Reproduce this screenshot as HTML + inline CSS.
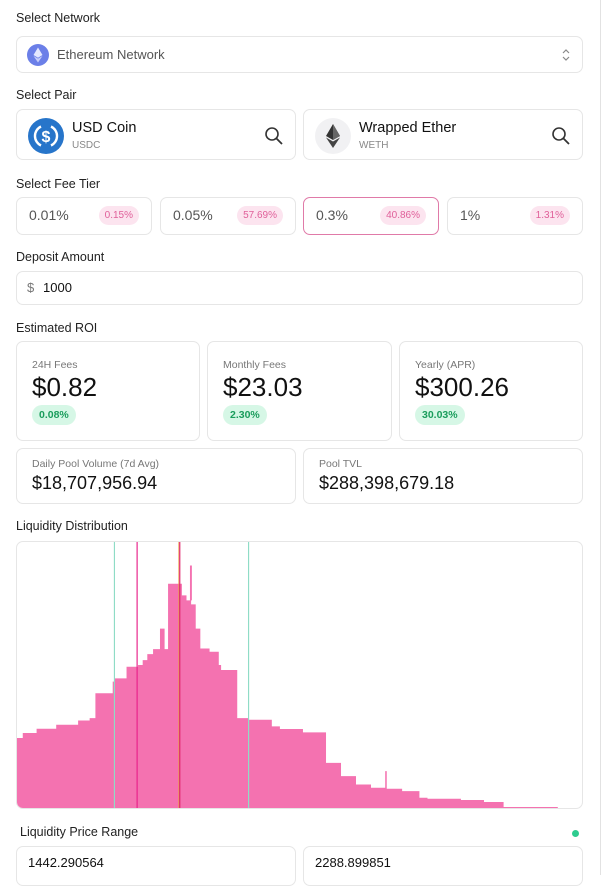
<!DOCTYPE html>
<html><head><style>
*{box-sizing:border-box;margin:0;padding:0}
body{width:603px;height:875px;background:#fff;font-family:"Liberation Sans",sans-serif;color:#111;position:relative;overflow:hidden}
.a{position:absolute}
.lbl{position:absolute;left:16px;font-size:12.5px;color:#222}
.box{position:absolute;border:1px solid #e6e6e6;border-radius:7px;background:#fff}
.fee{font-size:14px;color:#555;position:absolute;left:12px;top:9px}
.pill{position:absolute;right:12px;top:8px;background:#fce4ef;color:#e0609a;font-size:10px;padding:4px 6px;border-radius:10px}
.sm{position:absolute;left:15px;font-size:10.5px;color:#777}
.big{position:absolute;left:15px;font-size:26px;color:#111}
.g{position:absolute;left:15px;top:63px;background:#d6f7e6;color:#1a9d5c;font-size:10.5px;font-weight:bold;padding:4px 7px;border-radius:10px}
.mid{position:absolute;left:15px;top:24px;font-size:18px}
</style></head><body>
<div class="a" style="left:600px;top:0;width:1px;height:875px;background:#e2e2e2"></div>

<div class="lbl" style="top:11px">Select Network</div>
<div class="box" style="left:16px;top:36px;width:567px;height:37px">
 <svg class="a" style="left:10px;top:7px" width="22" height="22" viewBox="0 0 22 22"><circle cx="11" cy="11" r="11" fill="#6b7fe8"/><path d="M11 3.5L6.5 11 11 13.7 15.5 11Z" fill="#e4e8ff"/><path d="M11 14.6L6.5 12 11 18.5 15.5 12Z" fill="#c6cdfa"/></svg>
 <div class="a" style="left:40px;top:10px;font-size:13px;color:#555">Ethereum Network</div>
 <svg class="a" style="left:544px;top:11px" width="10" height="14" viewBox="0 0 10 14"><path d="M2 5L5 2 8 5M2 9L5 12 8 9" stroke="#888" stroke-width="1.2" fill="none"/></svg>
</div>

<div class="lbl" style="top:88px">Select Pair</div>
<div class="box" style="left:16px;top:109px;width:280px;height:51px">
 <svg class="a" style="left:11px;top:8px" width="36" height="36" viewBox="0 0 36 36"><circle cx="18" cy="18" r="18" fill="#2775ca"/><path d="M13 8.5A10.5 10.5 0 0 0 13 27.5M23 8.5A10.5 10.5 0 0 1 23 27.5" stroke="#fff" stroke-width="2.4" fill="none"/><text x="18" y="24" text-anchor="middle" fill="#fff" font-size="16" font-weight="bold" font-family="Liberation Sans">$</text></svg>
 <div class="a" style="left:55px;top:10px;font-size:14.5px">USD Coin</div>
 <div class="a" style="left:55px;top:30px;font-size:10px;color:#888">USDC</div>
 <svg class="a" style="left:247px;top:16px" width="20" height="20" viewBox="0 0 20 20"><circle cx="8" cy="8" r="6" stroke="#333" stroke-width="1.6" fill="none"/><path d="M12.5 12.5L18 18" stroke="#333" stroke-width="1.8"/></svg>
</div>
<div class="box" style="left:303px;top:109px;width:280px;height:51px">
 <svg class="a" style="left:11px;top:8px" width="36" height="36" viewBox="0 0 36 36"><circle cx="18" cy="18" r="18" fill="#f1f1f3"/><path d="M18 6L11 18 18 22 25 18Z" fill="#333"/><path d="M18 6L18 22 25 18Z" fill="#666"/><path d="M18 23.5L11 19.5 18 30 25 19.5Z" fill="#444"/></svg>
 <div class="a" style="left:55px;top:10px;font-size:14.5px">Wrapped Ether</div>
 <div class="a" style="left:55px;top:30px;font-size:10px;color:#888">WETH</div>
 <svg class="a" style="left:247px;top:16px" width="20" height="20" viewBox="0 0 20 20"><circle cx="8" cy="8" r="6" stroke="#333" stroke-width="1.6" fill="none"/><path d="M12.5 12.5L18 18" stroke="#333" stroke-width="1.8"/></svg>
</div>

<div class="lbl" style="top:177px">Select Fee Tier</div>
<div class="box" style="left:16px;top:197px;width:136px;height:38px"><span class="fee">0.01%</span><span class="pill">0.15%</span></div>
<div class="box" style="left:160px;top:197px;width:136px;height:38px"><span class="fee">0.05%</span><span class="pill">57.69%</span></div>
<div class="box" style="left:303px;top:197px;width:136px;height:38px;border-color:#e07aa8"><span class="fee">0.3%</span><span class="pill">40.86%</span></div>
<div class="box" style="left:447px;top:197px;width:136px;height:38px"><span class="fee">1%</span><span class="pill">1.31%</span></div>

<div class="lbl" style="top:250px">Deposit Amount</div>
<div class="box" style="left:16px;top:271px;width:567px;height:34px">
 <span class="a" style="left:10px;top:8px;font-size:13px;color:#777">$</span>
 <span class="a" style="left:26px;top:8px;font-size:13px">1000</span>
</div>

<div class="lbl" style="top:321px">Estimated ROI</div>
<div class="box" style="left:16px;top:341px;width:184px;height:100px"><span class="sm" style="top:17px">24H Fees</span><span class="big" style="top:30px">$0.82</span><span class="g">0.08%</span></div>
<div class="box" style="left:207px;top:341px;width:185px;height:100px"><span class="sm" style="top:17px">Monthly Fees</span><span class="big" style="top:30px">$23.03</span><span class="g">2.30%</span></div>
<div class="box" style="left:399px;top:341px;width:184px;height:100px"><span class="sm" style="top:17px">Yearly (APR)</span><span class="big" style="top:30px">$300.26</span><span class="g">30.03%</span></div>
<div class="box" style="left:16px;top:448px;width:280px;height:56px"><span class="sm" style="top:9px">Daily Pool Volume (7d Avg)</span><span class="mid">$18,707,956.94</span></div>
<div class="box" style="left:303px;top:448px;width:280px;height:56px"><span class="sm" style="top:9px">Pool TVL</span><span class="mid">$288,398,679.18</span></div>

<div class="lbl" style="top:519px">Liquidity Distribution</div>
<div class="box" style="left:16px;top:541px;width:567px;height:268px;overflow:hidden">
<svg class="a" style="left:0;top:0" width="565" height="266" viewBox="45 34 1470 802" preserveAspectRatio="none">
<path fill="#f472b0" d="M44 836V625H60V610H96V597H147V585H204V572H234V565H249V490H294V455H300V445H330V410H360V405H372V390H384V372H399V357H417V295H429V357H438V160H474V195H486V210H495V105H500V210H498V222H510V295H522V355H546V365H570V405H576V420H618V565H648V570H708V590H729V598H789V608H849V700H888V740H927V765H966V775H1003V725H1007V778H1047V785H1092V805H1113V808H1200V812H1260V818H1311V833H1452V836Z"/>
<rect x="297" y="34" width="3" height="802" fill="#8fdcc6"/>
<rect x="646" y="34" width="3" height="802" fill="#8fdcc6"/>
<rect x="356" y="34" width="3" height="802" fill="#e8208a"/>
<rect x="465" y="34" width="2" height="802" fill="#e8a040"/>
<rect x="467" y="34" width="3" height="802" fill="#e0206a"/>
</svg>
</div>

<div class="a" style="left:20px;top:825px;font-size:12.5px;color:#222">Liquidity Price Range</div>
<div class="a" style="left:572px;top:830px;width:7px;height:7px;border-radius:50%;background:#2ecc8f"></div>
<div class="box" style="left:16px;top:846px;width:280px;height:40px"><span class="a" style="left:11px;top:8px;font-size:13px">1442.290564</span></div>
<div class="box" style="left:303px;top:846px;width:280px;height:40px"><span class="a" style="left:11px;top:8px;font-size:13px">2288.899851</span></div>
</body></html>
